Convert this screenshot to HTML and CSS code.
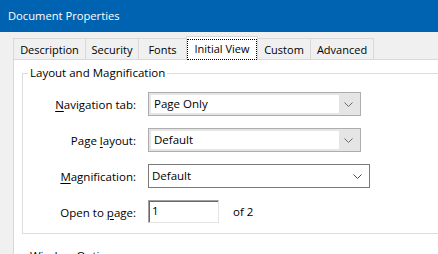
FILE: index.html
```html
<!DOCTYPE html>
<html>
<head>
<meta charset="utf-8">
<link rel="stylesheet" href="styles.css">
</head>
<body>
<div class="titlebar">Document Properties</div>
<div class="dialog">
  <div class="tabs">
    <div class="tab t-desc">Description</div>
    <div class="tab t-sec">Security</div>
    <div class="tab t-fonts">Fonts</div>
    <div class="tab t-init selected"><span class="focus">Initial View</span></div>
    <div class="tab t-cust">Custom</div>
    <div class="tab t-adv">Advanced</div>
  </div>
  <div class="panel">
    <fieldset class="group">
      <legend>Layout and Magnification</legend>
      <div class="form">
        <div class="lbl"><u>N</u>avigation tab:</div>
        <div class="combo"><span class="field">Page Only</span><span class="arrow"><svg width="9" height="6" viewBox="0 0 9 6"><polyline points="0.5,0.5 4.5,4.5 8.5,0.5" fill="none" stroke="#6a6a6a" stroke-width="1"/></svg></span></div>

        <div class="lbl">Page <u>l</u>ayout:</div>
        <div class="combo"><span class="field">Default</span><span class="arrow"><svg width="9" height="6" viewBox="0 0 9 6"><polyline points="0.5,0.5 4.5,4.5 8.5,0.5" fill="none" stroke="#6a6a6a" stroke-width="1"/></svg></span></div>

        <div class="lbl"><u>M</u>agnification:</div>
        <div class="combo editable"><span class="field">Default</span><span class="arrow"><svg width="9" height="6" viewBox="0 0 9 6"><polyline points="0.5,0.5 4.5,4.5 8.5,0.5" fill="none" stroke="#4a4a4a" stroke-width="1"/></svg></span></div>

        <div class="lbl">Open to <u>p</u>age:</div>
        <div class="pagerow"><span class="textbox">1</span><span class="of">of 2</span></div>
      </div>
    </fieldset>
    <fieldset class="group second">
      <legend>Window Options</legend>
      <div class="filler"></div>
    </fieldset>
  </div>
</div>
</body>
</html>
```
FILE: styles.css
```css
html, body {
  margin: 0;
  padding: 0;
}
body {
  width: 438px;
  height: 254px;
  overflow: hidden;
  background: #f0f0f0;
  font-family: "Open Sans", "Noto Sans", sans-serif;
  font-size: 11.5px;
  color: #000;
}
.titlebar {
  height: 32px;
  background: #0063b1;
  color: #fff;
  font-size: 11.2px;
  display: flex;
  align-items: center;
  padding-left: 8px;
  padding-bottom: 1px;
  box-sizing: border-box;
}
.dialog {
  padding: 4px 0 0 13px;
}
.tabs {
  display: flex;
  align-items: flex-end;
  height: 23px;
  font-size: 11px;
}
.tab {
  box-sizing: border-box;
  height: 21px;
  border: 1px solid #d9d9d9;
  border-bottom: none;
  margin-right: -1px;
  display: flex;
  align-items: center;
  justify-content: center;
  background: #f0f0f0;
  white-space: nowrap;
}
.t-desc { width: 73px; }
.t-sec { width: 54px; }
.t-fonts { width: 49px; }
.t-init { width: 72px; }
.t-cust { width: 54px; }
.t-adv { width: 64px; }
.tab.selected {
  height: 24px;
  margin-bottom: -1px;
  background: #fff;
  position: relative;
  z-index: 1;
  align-items: flex-start;
  padding-top: 3px;
}
.focus {
  outline: 1px dotted #000;
  outline-offset: 0;
  padding: 0 2px;
  height: 19px;
  line-height: 17px;
  box-sizing: border-box;
  width: 68px;
  text-align: center;
}
.panel {
  box-sizing: border-box;
  background: #fff;
  border-top: 1px solid #d9d9d9;
  border-left: 1px solid #d9d9d9;
  padding: 5px 0 0 8px;
  width: 425px;
  height: 195px;
  overflow: hidden;
}
.group {
  margin: 0 -4px 0 0;
  border: 1px solid #dcdcdc;
  padding: 11px 0 9px 0;
}
.group legend {
  margin-left: 5px;
  padding: 0 2px;
  line-height: 16px;
}
.group.second {
  margin-top: 14px;
}
.filler {
  height: 40px;
}
.form {
  display: grid;
  grid-template-columns: 113px auto;
  grid-auto-rows: 24px;
  row-gap: 12px;
  column-gap: 12px;
  align-items: center;
  justify-items: start;
}
.lbl {
  justify-self: end;
  text-align: right;
  white-space: nowrap;
}
.lbl u {
  text-decoration-thickness: 1px;
  text-underline-offset: 2px;
}
.combo {
  box-sizing: border-box;
  width: 213px;
  height: 24px;
  border: 1px solid #adadad;
  background: #e5e5e5;
  padding: 2px;
  display: flex;
}
.combo .field {
  flex: 1;
  background: #fff;
  padding-left: 3px;
  line-height: 18px;
}
.combo .arrow {
  width: 19px;
  display: flex;
  align-items: center;
  justify-content: center;
  padding-top: 1px;
}
.combo.editable {
  width: 222px;
  border-color: #7a7a7a;
  background: #fff;
}
.combo.editable .field {
  padding-left: 1px;
}
.combo.editable .arrow {
  width: 20px;
}
.pagerow {
  display: flex;
  align-items: center;
  height: 23px;
  align-self: start;
}
.textbox {
  box-sizing: border-box;
  width: 71px;
  height: 23px;
  border-top: 1px solid #a0a0a0;
  border-left: 1px solid #a0a0a0;
  border-right: 1px solid #e3e3e3;
  border-bottom: 1px solid #e3e3e3;
  box-shadow: inset 1px 1px 0 #696969;
  padding-left: 3px;
  line-height: 20px;
  background: #fff;
}
.of {
  margin-left: 14px;
}
```
